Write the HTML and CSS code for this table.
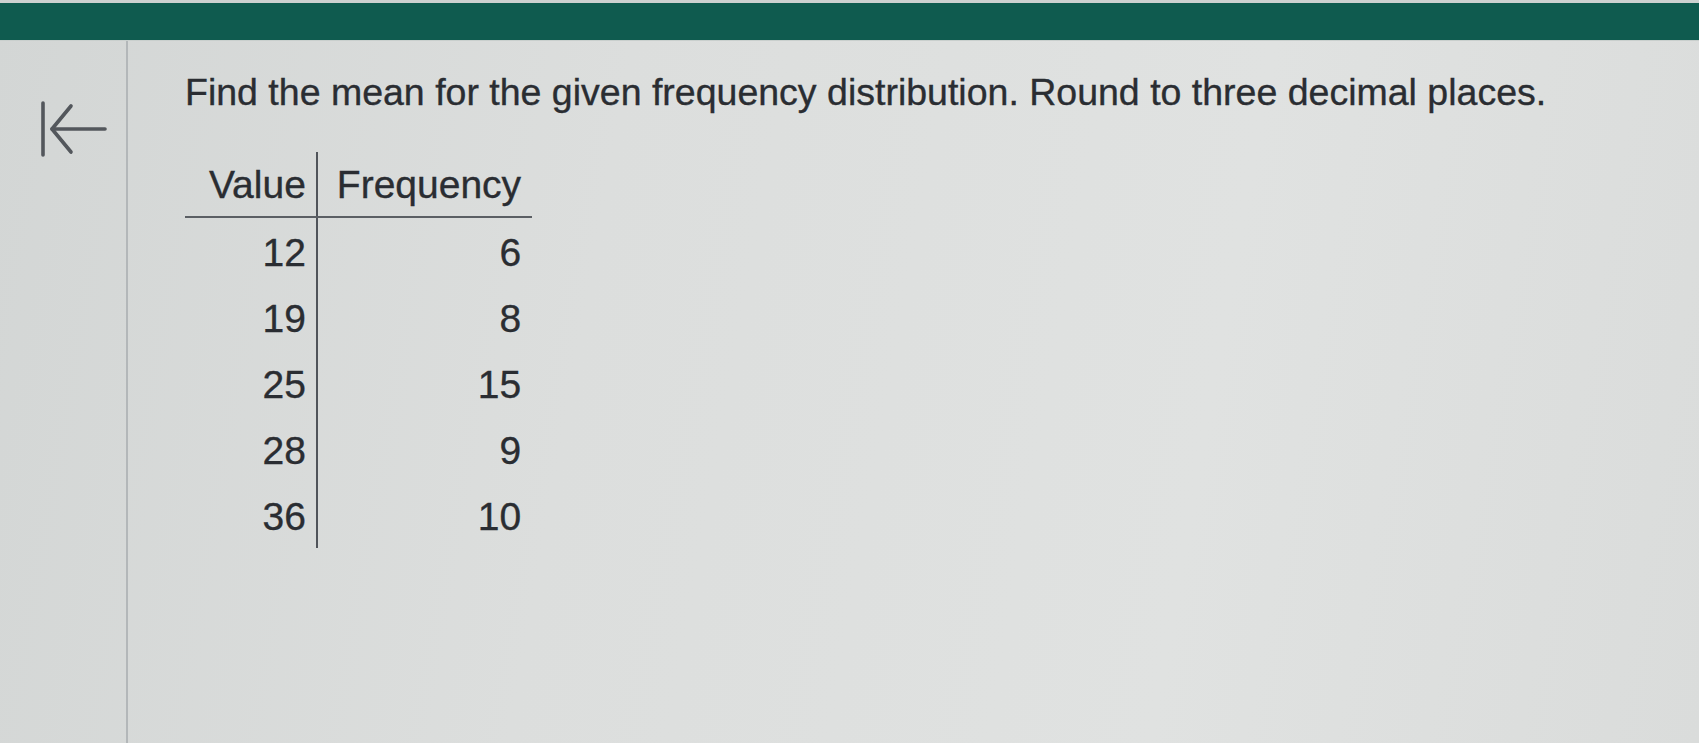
FILE: index.html
```html
<!DOCTYPE html>
<html lang="en">
<head>
<meta charset="utf-8">
<title>Frequency distribution</title>
<link rel="stylesheet" href="styles.css">
</head>
<body>
<div class="topbar"></div>
<div class="layout">
  <aside class="sidebar">
    <button class="back" aria-label="Collapse">
      <svg width="70" height="60" viewBox="0 0 70 60">
        <line x1="9" y1="4" x2="9" y2="56" stroke="#53575c" stroke-width="3.6" stroke-linecap="round"/>
        <line x1="18" y1="30" x2="71" y2="30" stroke="#53575c" stroke-width="3.6" stroke-linecap="round"/>
        <polyline points="37,7 18,30 37,53" fill="none" stroke="#53575c" stroke-width="3.6" stroke-linecap="round" stroke-linejoin="round"/>
      </svg>
    </button>
  </aside>
  <main class="content">
    <p class="question">Find the mean for the given frequency distribution. Round to three decimal places.</p>
    <table class="freq">
      <thead>
        <tr><th class="c1">Value</th><th class="c2">Frequency</th></tr>
      </thead>
      <tbody>
        <tr><td class="c1">12</td><td class="c2">6</td></tr>
        <tr><td class="c1">19</td><td class="c2">8</td></tr>
        <tr><td class="c1">25</td><td class="c2">15</td></tr>
        <tr><td class="c1">28</td><td class="c2">9</td></tr>
        <tr><td class="c1">36</td><td class="c2">10</td></tr>
      </tbody>
    </table>
  </main>
</div>
</body>
</html>
```
FILE: styles.css
```css
html, body {
  margin: 0;
  height: 100%;
}
body {
  font-family: "Liberation Sans", Arial, sans-serif;
  color: #2a2d32;
  background: linear-gradient(100deg, #d3d6d5 0%, #dcdedd 35%, #e0e2e1 70%, #dadcdb 100%);
  overflow: hidden;
  -webkit-text-stroke: 0.35px #2a2d32;
}
.topbar {
  height: 37px;
  border-top: 3px solid #cdd1d0;
  background: #0f5b4f;
  border-bottom: 1px solid #c9cfcd;
}
.layout {
  display: flex;
  height: 702px;
}
.sidebar {
  width: 126px;
  flex: none;
  border-right: 2px solid #b3b7b9;
}
.back {
  display: block;
  margin: 58px 0 0 30px;
  padding: 0;
  border: 0;
  background: none;
  width: 78px;
  height: 60px;
}
.back svg {
  overflow: visible;
}
.content {
  flex: 1;
  padding: 31px 0 0 57px;
}
.question {
  margin: 0;
  font-size: 37.5px;
  line-height: 40px;
}
.freq {
  margin-top: 40px;
  border-collapse: collapse;
  font-size: 39px;
  line-height: 40px;
}
.freq th {
  font-weight: normal;
  padding: 13px 0 11px;
  border-bottom: 2px solid #5b5f64;
}
.freq td {
  padding: 15px 0 11px;
}
.freq .c1 {
  text-align: right;
  padding-right: 10px;
  padding-left: 24px;
  border-right: 2px solid #50545a;
}
.freq .c2 {
  text-align: right;
  padding-left: 19px;
  padding-right: 11px;
}
```
